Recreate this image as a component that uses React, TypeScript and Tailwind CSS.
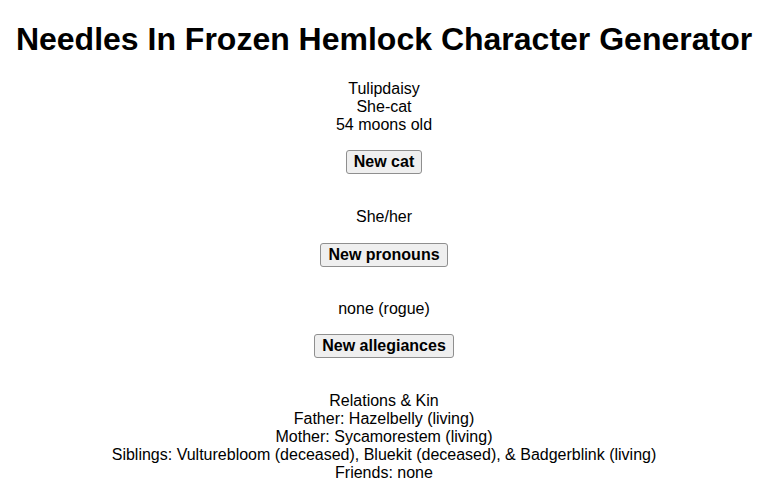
import { useState } from 'react'

const NAMES = ['Tulipdaisy', 'Sparrowfeather', 'Mossheart', 'Emberpelt']
const PRONOUNS = ['She/her', 'He/him', 'They/them']
const CLANS = ['none (rogue)', 'ThunderClan', 'RiverClan']

function GenButton({ label, onClick }: { label: string; onClick: () => void }) {
  return (
    <button
      onClick={onClick}
      className="rounded-[3px] border border-[#8f8f8f] bg-[#efefef] px-[7px] py-[2px] text-base font-bold leading-[18px] text-black hover:bg-[#e5e5e5]"
    >
      {label}
    </button>
  )
}

export default function App() {
  const [cat, setCat] = useState(0)
  const [pron, setPron] = useState(0)
  const [clan, setClan] = useState(0)

  return (
    <div className="flex flex-col items-center bg-white text-center text-base leading-[18px] text-black [font-family:'Liberation_Sans',Arial,sans-serif]">
      <h1 className="mt-[21px] text-[32px] font-bold leading-[37px]">
        Needles In Frozen Hemlock Character Generator
      </h1>

      <div className="mt-[22px]">
        <div>{NAMES[cat]}</div>
        <div>She-cat</div>
        <div>54 moons old</div>
      </div>
      <div className="mt-4">
        <GenButton label="New cat" onClick={() => setCat((cat + 1) % NAMES.length)} />
      </div>

      <div className="mt-[34px]">{PRONOUNS[pron]}</div>
      <div className="mt-[17px]">
        <GenButton label="New pronouns" onClick={() => setPron((pron + 1) % PRONOUNS.length)} />
      </div>

      <div className="mt-[33px]">{CLANS[clan]}</div>
      <div className="mt-[16px]">
        <GenButton label="New allegiances" onClick={() => setClan((clan + 1) % CLANS.length)} />
      </div>

      <div className="mt-[34px]">
        <div>Relations &amp; Kin</div>
        <div>Father: Hazelbelly (living)</div>
        <div>Mother: Sycamorestem (living)</div>
        <div>Siblings: Vulturebloom (deceased), Bluekit (deceased), &amp; Badgerblink (living)</div>
        <div>Friends: none</div>
      </div>
    </div>
  )
}
